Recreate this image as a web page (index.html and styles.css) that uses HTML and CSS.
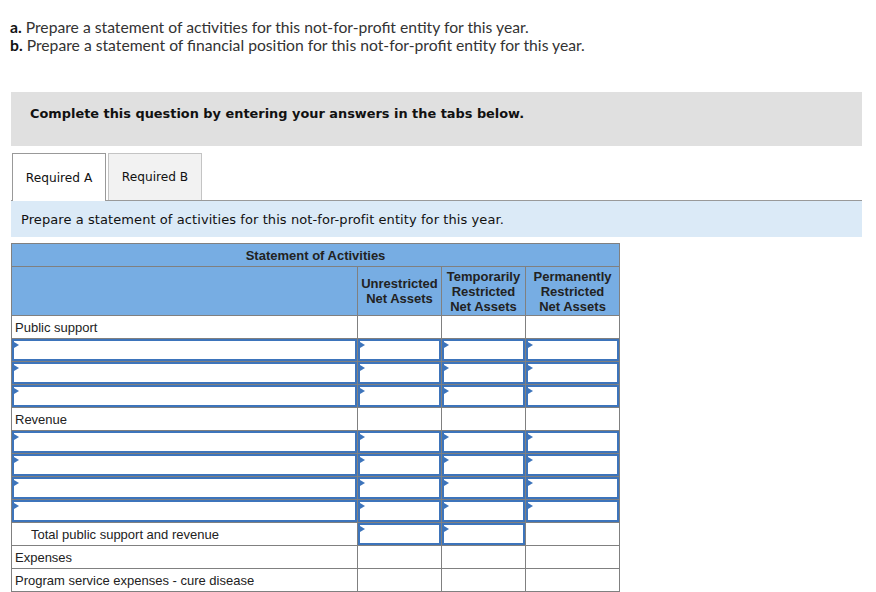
FILE: index.html
```html
<!DOCTYPE html>
<html>
<head>
<meta charset="utf-8">
<link rel="stylesheet" href="styles.css">
</head>
<body>
<div class="prompt">
  <p><b>a.</b> Prepare a statement of activities for this not-for-profit entity for this year.</p>
  <p><b>b.</b> Prepare a statement of financial position for this not-for-profit entity for this year.</p>
</div>
<div class="notice">Complete this question by entering your answers in the tabs below.</div>
<div class="tabs">
  <div class="tab active">Required A</div>
  <div class="tab">Required B</div>
</div>
<div class="instr">Prepare a statement of activities for this not-for-profit entity for this year.</div>
<table class="stmt">
  <colgroup><col class="c-label"><col class="c-val"><col class="c-val"><col class="c-last"></colgroup>
  <thead>
    <tr><th colspan="4" class="title">Statement of Activities</th></tr>
    <tr class="hdr">
      <th></th>
      <th>Unrestricted<br>Net Assets</th>
      <th>Temporarily<br>Restricted<br>Net Assets</th>
      <th>Permanently<br>Restricted<br>Net Assets</th>
    </tr>
  </thead>
  <tbody>
    <tr><td class="lbl">Public support</td><td></td><td></td><td></td></tr>
    <tr class="in"><td><div class="inp"></div></td><td><div class="inp"></div></td><td><div class="inp"></div></td><td><div class="inp"></div></td></tr>
    <tr class="in"><td><div class="inp"></div></td><td><div class="inp"></div></td><td><div class="inp"></div></td><td><div class="inp"></div></td></tr>
    <tr class="in"><td><div class="inp"></div></td><td><div class="inp"></div></td><td><div class="inp"></div></td><td><div class="inp"></div></td></tr>
    <tr><td class="lbl">Revenue</td><td></td><td></td><td></td></tr>
    <tr class="in"><td><div class="inp"></div></td><td><div class="inp"></div></td><td><div class="inp"></div></td><td><div class="inp"></div></td></tr>
    <tr class="in"><td><div class="inp"></div></td><td><div class="inp"></div></td><td><div class="inp"></div></td><td><div class="inp"></div></td></tr>
    <tr class="in"><td><div class="inp"></div></td><td><div class="inp"></div></td><td><div class="inp"></div></td><td><div class="inp"></div></td></tr>
    <tr class="in"><td><div class="inp"></div></td><td><div class="inp"></div></td><td><div class="inp"></div></td><td><div class="inp"></div></td></tr>
    <tr class="total"><td class="lbl indent">Total public support and revenue</td><td class="tv"><div class="inp"></div></td><td class="tv"><div class="inp"></div></td><td class="tv"></td></tr>
    <tr><td class="lbl">Expenses</td><td></td><td></td><td></td></tr>
    <tr><td class="lbl">Program service expenses - cure disease</td><td></td><td></td><td></td></tr>
  </tbody>
</table>
</body>
</html>
```
FILE: styles.css
```css
html, body {
  margin: 0;
  padding: 0;
  background: #fff;
}
body {
  padding: 18px 14px 0 10px;
  color: #222;
}
.prompt {
  font-family: Lato, "Open Sans", sans-serif;
  font-size: 15.7px;
  line-height: 18px;
  color: #333;
}
.prompt p {
  margin: 0;
}
.prompt b {
  color: #111;
}
.notice {
  margin: 38px 0 0 1px;
  height: 54px;
  box-sizing: border-box;
  background: #e0e0e0;
  padding: 13px 0 0 19px;
  font-family: "DejaVu Sans", Verdana, sans-serif;
  font-weight: bold;
  font-size: 12.9px;
  line-height: 18px;
  color: #111;
}
.tabs {
  margin: 7px 0 0 1px;
  display: flex;
  gap: 2px;
  border-bottom: 1px solid #999;
  padding-left: 1px;
}
.tab {
  width: 92px;
  height: 46px;
  display: flex;
  align-items: center;
  justify-content: center;
  font-family: "DejaVu Sans", Verdana, sans-serif;
  font-size: 12.2px;
  color: #111;
  background: #f2f2f2;
  border: 1px solid #c4c4c4;
  border-bottom: none;
}
.tab.active {
  background: #fff;
  border-color: #999;
  margin-bottom: -1px;
  height: 47px;
}
.instr {
  margin-left: 1px;
  height: 36px;
  background: #dbeaf7;
  padding-left: 10px;
  display: flex;
  align-items: center;
  font-family: "DejaVu Sans", Verdana, sans-serif;
  font-size: 13px;
  letter-spacing: 0.08px;
  color: #111;
}
.stmt {
  margin: 6px 0 0 1px;
  border-collapse: collapse;
  table-layout: fixed;
  width: 609px;
  font-family: "Liberation Sans", Arial, sans-serif;
  font-size: 13px;
  color: #222;
}
.c-label { width: 346px; }
.c-val { width: 84px; }
.c-last { width: 94px; }
.stmt th, .stmt td {
  border: 1px solid #808080;
  padding: 0;
  height: 22px;
}
.stmt th {
  background: #77ade3;
  font-weight: bold;
  line-height: 15px;
  text-align: center;
  color: #222;
}
.stmt tr.hdr th {
  height: 48px;
}
.stmt td.lbl {
  padding-left: 3px;
  text-align: left;
}
.stmt td.indent {
  padding-left: 19px;
}
.stmt tr.total td.tv {
  border-top: 1px solid #000;
}
.inp {
  position: relative;
  box-sizing: border-box;
  height: 22px;
  border: 2px solid #3d74bb;
}
.inp::before {
  content: "";
  position: absolute;
  left: 0;
  top: 1px;
  border-left: 5px solid #3d74bb;
  border-top: 3.5px solid transparent;
  border-bottom: 3.5px solid transparent;
}
```
